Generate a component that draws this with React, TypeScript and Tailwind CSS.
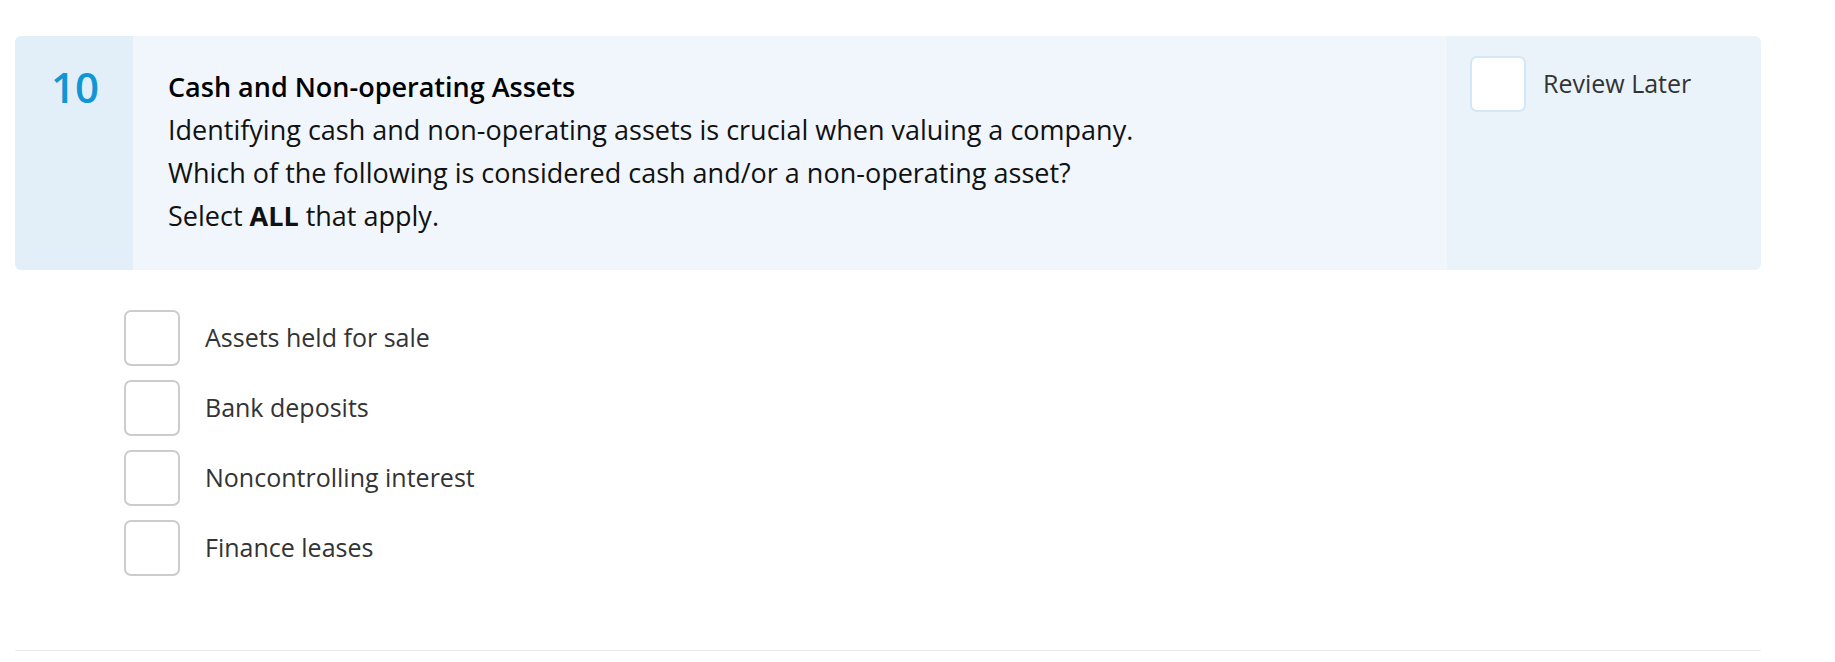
const options = [
  "Assets held for sale",
  "Bank deposits",
  "Noncontrolling interest",
  "Finance leases",
];

const Box = ({ border }: { border: string }) => (
  <span
    className={`block h-[56px] w-[56px] shrink-0 rounded-[7px] border-2 bg-white ${border}`}
  ></span>
);

export default function App() {
  return (
    <div className="min-h-[662px] bg-white font-['Open_Sans',sans-serif]">
      <div className="ml-[15px] w-[1746px] pt-[36px]">
        {/* Question card */}
        <div className="flex overflow-hidden rounded-[6px]">
          <div className="w-[118px] shrink-0 bg-[#e2eff8] pl-[36px] pt-[23px]">
            <span className="block text-[42px] font-semibold leading-[56px] text-[#1196d5]">10</span>
          </div>
          <div className="flex-1 bg-[#f0f6fb] pb-[33px] pl-[35px] pt-[29px] text-[27px] leading-[43px] text-[#111]">
            <h2 className="font-semibold text-black">Cash and Non-operating Assets</h2>
            <p>Identifying cash and non-operating assets is crucial when valuing a company.</p>
            <p>Which of the following is considered cash and/or a non-operating asset?</p>
            <p>
              Select <strong className="font-bold">ALL</strong> that apply.
            </p>
          </div>
          <div className="w-[314px] shrink-0 bg-[#eaf3fa] pl-[23px] pt-[20px]">
            <label className="flex items-center gap-[17px]">
              <Box border="border-[#d3e7f5]" />
              <span className="text-[25px] text-[#333]">Review Later</span>
            </label>
          </div>
        </div>

        {/* Answers */}
        <div className="mt-[40px] flex flex-col gap-[14px] pl-[109px]">
          {options.map((o) => (
            <label key={o} className="flex items-center gap-[25px]">
              <Box border="border-[#cccccc]" />
              <span className="text-[25px] text-[#333]">{o}</span>
            </label>
          ))}
        </div>

        <div className="mt-[74px] border-t border-[#ececec]"></div>
      </div>
    </div>
  );
}
